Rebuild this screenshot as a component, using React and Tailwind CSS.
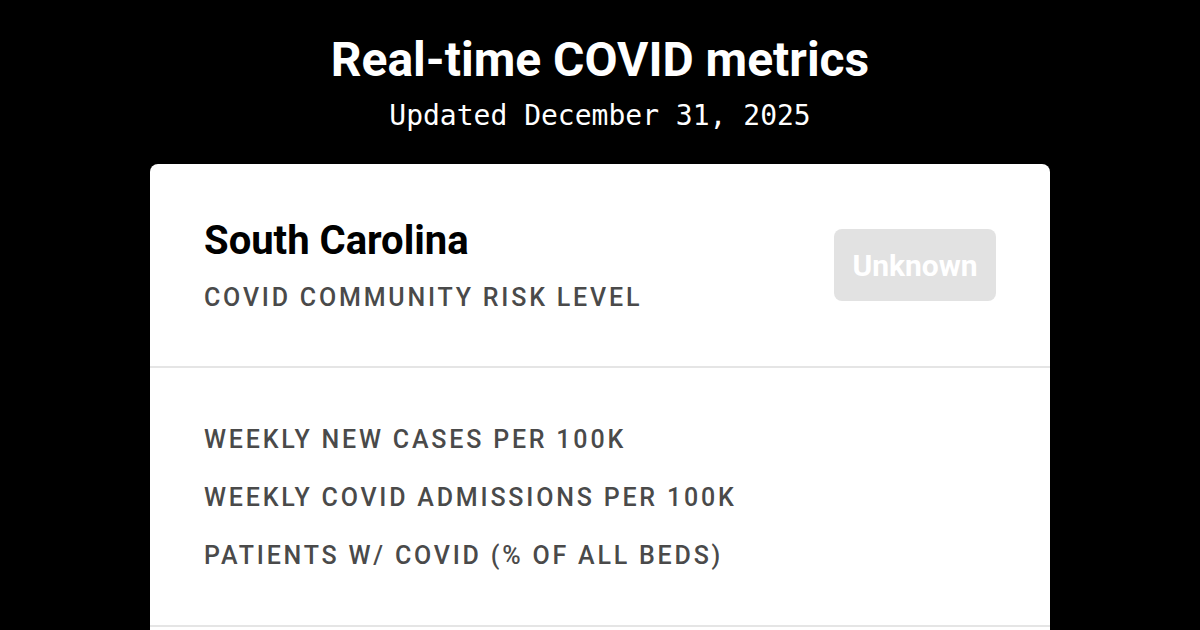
export default function App() {
  const row = "text-[#4a4a4a] font-medium text-[25px] leading-[32px] tracking-[2.8px]";
  return (
    <div className="w-[1200px] h-[630px] bg-black overflow-hidden flex flex-col items-center" style={{ fontFamily: "Roboto, 'Liberation Sans', sans-serif" }}>
      <h1 className="mt-[28px] text-white font-bold text-[48px] leading-[64px]">Real-time COVID metrics</h1>
      <div className="mt-[6px] text-white text-[28px] leading-[36px]" style={{ fontFamily: "'DejaVu Sans Mono', 'Liberation Mono', monospace" }}>Updated December 31, 2025</div>
      <div className="mt-[30px] w-[900px] bg-white rounded-[8px] flex flex-col shrink-0">
        <div className="flex items-center justify-between px-[54px] h-[204px] border-b-2 border-[#e5e5e5]">
          <div className="flex flex-col">
            <div className="text-black font-bold text-[40px] leading-[48px]">South Carolina</div>
            <div className={"mt-[17px] " + row}>COVID COMMUNITY RISK LEVEL</div>
          </div>
          <div className="w-[162px] h-[72px] rounded-[8px] bg-[#e2e2e2] text-white font-bold text-[30px] flex items-center justify-center">Unknown</div>
        </div>
        <div className="flex flex-col pl-[54px] pt-[56px] pb-[53px] gap-[26px] border-b-2 border-[#e5e5e5]">
          <div className={row}>WEEKLY NEW CASES PER 100K</div>
          <div className={row}>WEEKLY COVID ADMISSIONS PER 100K</div>
          <div className={row}>PATIENTS W/ COVID (% OF ALL BEDS)</div>
        </div>
        <div className="h-[100px]"></div>
      </div>
    </div>
  );
}
